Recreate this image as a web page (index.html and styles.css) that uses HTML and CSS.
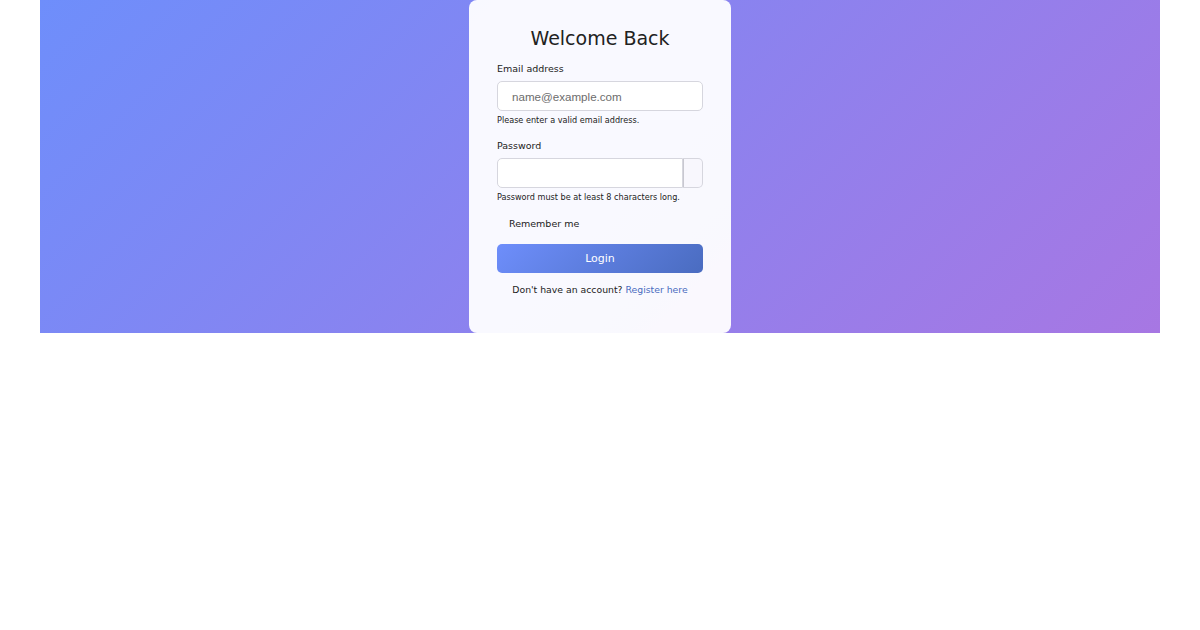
FILE: index.html
```html
<!DOCTYPE html>
<html>
<head>
    <meta charset="UTF-8">
    <title>Login</title>
    <link rel="stylesheet" href="styles.css">
</head>
<body>
    <div class="page">
        <div class="login-card">
            <h1>Welcome Back</h1>
            <form>
                <div class="field">
                    <label for="email">Email address</label>
                    <input type="email" id="email" placeholder="name@example.com">
                    <small>Please enter a valid email address.</small>
                </div>
                <div class="field">
                    <label for="password">Password</label>
                    <div class="input-group">
                        <input type="password" id="password">
                        <button type="button" class="toggle"></button>
                    </div>
                    <small>Password must be at least 8 characters long.</small>
                </div>
                <div class="remember">
                    <label>Remember me</label>
                </div>
                <button type="button" class="login-btn">Login</button>
                <p class="register">Don't have an account? <a href="#">Register here</a></p>
            </form>
        </div>
    </div>
</body>
</html>
```

FILE: styles.css
```css
body {
    margin: 0;
    font-family: "DejaVu Sans", sans-serif;
    color: #222;
}

.page {
    margin: 0 40px;
    display: flex;
    justify-content: center;
    background: linear-gradient(135deg, #6e8efb, #a777e3);
}

.login-card {
    width: 262px;
    box-sizing: border-box;
    padding: 26px 28px 37px;
    background-color: rgba(255, 255, 255, 0.95);
    border-radius: 8px;
}

h1 {
    margin: 0 0 13px;
    font-size: 19px;
    font-weight: normal;
    text-align: center;
    line-height: 24px;
    color: #222;
}

.field {
    margin-bottom: 15px;
}

.field label {
    display: block;
    font-size: 9.5px;
    line-height: 12px;
    margin-bottom: 6px;
    color: #222;
}

.field input {
    width: 100%;
    box-sizing: border-box;
    height: 30px;
    padding: 0 14px;
    border: 1px solid #d6d6de;
    border-radius: 5px;
    background: #fff;
    font-family: "Liberation Sans", Arial, sans-serif;
    font-size: 11.6px;
}

.field input::placeholder {
    color: #6c6c6c;
}

.field small {
    display: block;
    margin-top: 4px;
    font-size: 8.15px;
    line-height: 10px;
    color: #222;
}

.input-group {
    display: flex;
}

.input-group input {
    border-radius: 5px 0 0 5px;
}

.toggle {
    width: 20px;
    height: 30px;
    flex: none;
    border: 1px solid #d6d6de;
    border-left: 1px solid #c8c8d0;
    border-radius: 0 5px 5px 0;
    background: #f8f7fd;
    padding: 0;
}

.remember {
    padding-left: 12px;
    margin-top: 16px;
    margin-bottom: 14px;
    font-size: 9.5px;
    line-height: 12px;
}

.login-btn {
    display: block;
    width: 100%;
    height: 29px;
    border: none;
    border-radius: 5px;
    background: linear-gradient(135deg, #6e8efb, #4a6cc0);
    color: #fff;
    font-family: "DejaVu Sans", sans-serif;
    font-size: 11px;
}

.register {
    margin: 11px 0 0;
    text-align: center;
    font-size: 9.3px;
    line-height: 12px;
    color: #222;
}

.register a {
    color: #4a6cc0;
    text-decoration: none;
}
```
